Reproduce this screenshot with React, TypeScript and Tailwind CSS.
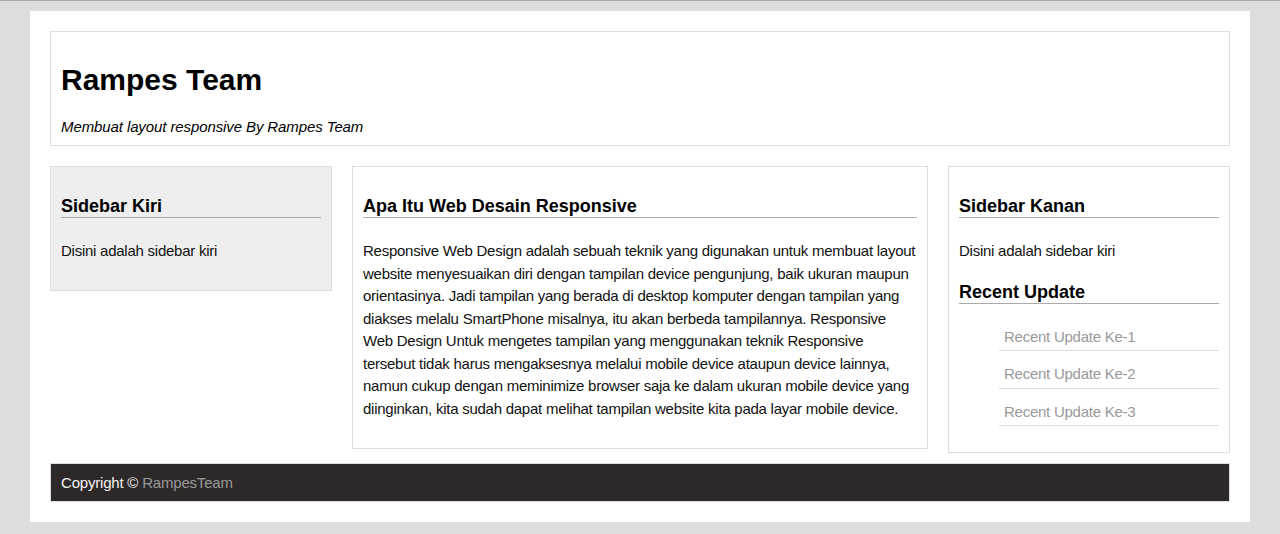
import React from "react";

const recent = ["Recent Update Ke-1", "Recent Update Ke-2", "Recent Update Ke-3"];

function BoxTitle({ children, className = "" }: { children: React.ReactNode; className?: string }) {
  return (
    <h2 className={"text-[18px] font-bold leading-[21px] text-black border-b border-[#aaaaaa] " + className}>
      {children}
    </h2>
  );
}

export default function App() {
  return (
    <div className="min-h-screen bg-[#dddddd] border-t border-[#a9a9a9] pt-[10px] px-[30px] pb-[12px] font-['Liberation_Sans',Arial,sans-serif] text-[#111]">
      <div className="bg-white p-5">
        {/* Header */}
        <header className="border border-[#dddddd] px-[10px] pt-[31px] pb-[10px]">
          <h1 className="text-[30px] font-bold leading-[34px] text-black">Rampes Team</h1>
          <p className="mt-[21px] text-[15px] italic leading-[17px] tracking-[-0.1px] text-black">
            Membuat layout responsive By Rampes Team
          </p>
        </header>

        {/* Columns */}
        <div className="mt-5 flex items-start gap-5 tracking-[-0.25px]">
          <aside className="w-[282px] shrink-0 border border-[#dddddd] bg-[#eeeeee] px-[10px] pt-[29px] pb-[27px]">
            <BoxTitle className="tracking-normal">Sidebar Kiri</BoxTitle>
            <p className="mt-[22px] text-[15px] leading-[22.5px]">Disini adalah sidebar kiri</p>
          </aside>

          <main className="w-[576px] shrink-0 border border-[#dddddd] px-[10px] pt-[29px] pb-[28px]">
            <BoxTitle className="tracking-normal">Apa Itu Web Desain Responsive</BoxTitle>
            <p className="mt-[22px] text-[15px] leading-[22.5px]">
              Responsive Web Design adalah sebuah teknik yang digunakan untuk membuat layout website
              menyesuaikan diri dengan tampilan device pengunjung, baik ukuran maupun orientasinya. Jadi
              tampilan yang berada di desktop komputer dengan tampilan yang diakses melalu SmartPhone
              misalnya, itu akan berbeda tampilannya. Responsive Web Design Untuk mengetes tampilan yang
              menggunakan teknik Responsive tersebut tidak harus mengaksesnya melalui mobile device ataupun
              device lainnya, namun cukup dengan meminimize browser saja ke dalam ukuran mobile device yang
              diinginkan, kita sudah dapat melihat tampilan website kita pada layar mobile device.
            </p>
          </main>

          <aside className="w-[282px] shrink-0 border border-[#dddddd] px-[10px] pt-[29px] pb-[26px]">
            <BoxTitle className="tracking-normal">Sidebar Kanan</BoxTitle>
            <p className="mt-[22px] text-[15px] leading-[22.5px]">Disini adalah sidebar kiri</p>
            <BoxTitle className="mt-[19px] tracking-normal">Recent Update</BoxTitle>
            <ul className="mt-[10px] pl-[40px]">
              {recent.map((item) => (
                <li
                  key={item}
                  className="border-b border-[#dddddd] pl-[5px] pt-[12px] pb-[2px] text-[15px] leading-[22.5px] text-[#999999]"
                >
                  {item}
                </li>
              ))}
            </ul>
          </aside>
        </div>

        {/* Footer */}
        <footer className="mt-[10px] border border-[#dddddd] bg-[#2e2929] px-[10px] py-[7px] text-[15px] leading-[23px] tracking-[-0.2px] text-[#f2f2f2]">
          Copyright © <span className="text-[#999999]">RampesTeam</span>
        </footer>
      </div>
    </div>
  );
}
